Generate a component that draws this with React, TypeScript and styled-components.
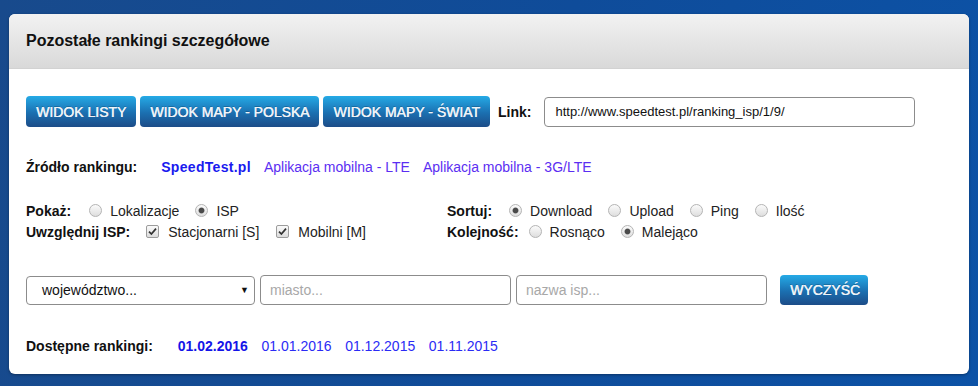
import React from 'react';
import styled, { createGlobalStyle } from 'styled-components';

const GlobalStyle = createGlobalStyle`
  html, body {
    margin: 0;
    padding: 0;
  }
  body {
    width: 978px;
    height: 386px;
    overflow: hidden;
    background: linear-gradient(100deg, #184a8c 0%, #0f4c9a 55%, #0c52a6 100%);
    font-family: 'Liberation Sans', Arial, sans-serif;
    font-size: 14px;
    color: #111;
  }
`;

const dates = ['01.02.2016', '01.01.2016', '01.12.2015', '01.11.2015'];

const App = () => {
  return (
    <>
      <GlobalStyle />
      <Card>
        <Header>
          <Title>Pozostałe rankingi szczegółowe</Title>
        </Header>
        <Body>
          <ButtonRow>
            <BlueButton>WIDOK LISTY</BlueButton>
            <BlueButton>WIDOK MAPY - POLSKA</BlueButton>
            <BlueButton>WIDOK MAPY - ŚWIAT</BlueButton>
            <LinkLabel>Link:</LinkLabel>
            <LinkInput readOnly value='http://www.speedtest.pl/ranking_isp/1/9/' />
          </ButtonRow>

          <SourceRow>
            <Label $space={24}>Źródło rankingu:</Label>
            <SourceLink $active>SpeedTest.pl</SourceLink>
            <SourceLink>Aplikacja mobilna - LTE</SourceLink>
            <SourceLink>Aplikacja mobilna - 3G/LTE</SourceLink>
          </SourceRow>

          <Options>
            <OptionRow>
              <Label $space={18}>Pokaż:</Label>
              <Option $first>
                <Radio />
                Lokalizacje
              </Option>
              <Option>
                <Radio $checked />
                ISP
              </Option>
            </OptionRow>
            <OptionRow>
              <Label $space={17}>Sortuj:</Label>
              <Option $first>
                <Radio $checked />
                Download
              </Option>
              <Option>
                <Radio />
                Upload
              </Option>
              <Option>
                <Radio />
                Ping
              </Option>
              <Option>
                <Radio />
                Ilość
              </Option>
            </OptionRow>
            <OptionRow>
              <Label $space={16}>Uwzględnij ISP:</Label>
              <Option $first $wide>
                <Check />
                Stacjonarni [S]
              </Option>
              <Option $wide>
                <Check />
                Mobilni [M]
              </Option>
            </OptionRow>
            <OptionRow>
              <Label $space={10}>Kolejność:</Label>
              <Option $first>
                <Radio />
                Rosnąco
              </Option>
              <Option>
                <Radio $checked />
                Malejąco
              </Option>
            </OptionRow>
          </Options>

          <FilterRow>
            <SelectBox>
              <span>województwo...</span>
              <Arrow>▼</Arrow>
            </SelectBox>
            <TextInput placeholder='miasto...' />
            <TextInput placeholder='nazwa isp...' />
            <ClearButton>WYCZYŚĆ</ClearButton>
          </FilterRow>

          <DatesRow>
            <Label $space={25}>Dostępne rankingi:</Label>
            {dates.map((d, i) => (
              <DateLink key={d} $active={i === 0}>
                {d}
              </DateLink>
            ))}
          </DatesRow>
        </Body>
      </Card>
    </>
  );
};

const Radio = ({ $checked }: { $checked?: boolean }) => (
  <RadioDot $checked={$checked} />
);

const Check = () => (
  <CheckBox>
    <svg width='9' height='9' viewBox='0 0 9 9'>
      <path d='M1 4.6 L3.4 7 L8 1.6' fill='none' stroke='#333' strokeWidth='1.7' />
    </svg>
  </CheckBox>
);

export default App;

// styled
const Card = styled.div`
  margin: 14px 0 0 9px;
  width: 960px;
  height: 360px;
  background: #fff;
  border-radius: 6px;
  overflow: hidden;
  box-shadow: 0 1px 3px rgba(0, 0, 0, 0.35);
`;

const Header = styled.div`
  height: 55px;
  display: flex;
  align-items: center;
  padding-left: 17px;
  background: linear-gradient(#f2f2f2, #d9d9d9);
  border-bottom: 1px solid #d2d2d2;
  box-sizing: border-box;
`;

const Title = styled.h1`
  margin: 0;
  font-size: 16px;
  font-weight: bold;
  color: #111;
`;

const Body = styled.div`
  padding: 27px 17px 0;
`;

const ButtonRow = styled.div`
  display: flex;
  align-items: center;
  gap: 4px;
  height: 31px;
`;

const BlueButton = styled.button`
  height: 31px;
  padding: 0 10px;
  border: none;
  border-radius: 4px;
  background: linear-gradient(#25aae6, #1b6fb0 55%, #1c4c88);
  color: #eef3f8;
  font-family: 'Liberation Sans', Arial, sans-serif;
  font-size: 14px;
  text-shadow: 0.4px 0 0 #eef3f8, 0 -1px 0 rgba(0, 0, 0, 0.2);
  cursor: pointer;
`;

const LinkLabel = styled.span`
  font-weight: bold;
  margin: 0 9px 0 4px;
`;

const LinkInput = styled.input`
  width: 371px;
  height: 30px;
  box-sizing: border-box;
  border: 1px solid #8c8c8c;
  border-radius: 4px;
  padding: 0 10px;
  font-family: 'Liberation Sans', Arial, sans-serif;
  font-size: 13px;
  color: #111;
  outline: none;
`;

const SourceRow = styled.div`
  display: flex;
  align-items: center;
  height: 20px;
  margin-top: 30px;
`;

const Label = styled.span<{ $space: number }>`
  font-weight: bold;
  margin-right: ${(p) => p.$space}px;
  white-space: nowrap;
`;

const SourceLink = styled.a<{ $active?: boolean }>`
  margin-right: 13px;
  color: ${(p) => (p.$active ? '#1a1aef' : '#5b2ef2')};
  font-weight: ${(p) => (p.$active ? 'bold' : 'normal')};
  letter-spacing: ${(p) => (p.$active ? '0.3px' : '0')};
  cursor: pointer;
`;

const Options = styled.div`
  display: grid;
  grid-template-columns: 421px auto;
  grid-auto-rows: 21px;
  margin-top: 23px;
`;

const OptionRow = styled.div`
  display: flex;
  align-items: center;
  white-space: nowrap;
`;

const Option = styled.label<{ $first?: boolean; $wide?: boolean }>`
  display: inline-flex;
  align-items: center;
  gap: ${(p) => (p.$wide ? 9 : 8)}px;
  margin-left: ${(p) => (p.$first ? 0 : p.$wide ? 17 : 16)}px;
  color: #222;
`;

const RadioDot = styled.span<{ $checked?: boolean }>`
  display: inline-block;
  width: 13px;
  height: 13px;
  box-sizing: border-box;
  border-radius: 50%;
  border: 1px solid #b4b4b4;
  background: ${(p) =>
    p.$checked
      ? 'radial-gradient(circle, #4a4a4a 0 2.4px, #8a8a8a 2.8px, transparent 3.4px), linear-gradient(#fbfbfb, #dedede)'
      : 'linear-gradient(#fbfbfb, #dedede)'};
`;

const CheckBox = styled.span`
  display: inline-flex;
  align-items: center;
  justify-content: center;
  width: 13px;
  height: 13px;
  box-sizing: border-box;
  border: 1px solid #9c9c9c;
  border-radius: 2px;
  background: linear-gradient(#fbfbfb, #dcdcdc);
`;

const FilterRow = styled.div`
  display: flex;
  align-items: center;
  height: 30px;
  margin-top: 33px;
`;

const SelectBox = styled.div`
  width: 229px;
  height: 29px;
  box-sizing: border-box;
  border: 1px solid #8c8c8c;
  border-radius: 4px;
  display: flex;
  align-items: center;
  justify-content: space-between;
  padding: 0 5px 0 15px;
  font-size: 14px;
  color: #111;
`;

const Arrow = styled.span`
  font-size: 9px;
  color: #111;
`;

const TextInput = styled.input`
  width: 251px;
  height: 30px;
  box-sizing: border-box;
  margin-left: 5px;
  border: 1px solid #8c8c8c;
  border-radius: 4px;
  padding: 0 9px;
  font-family: 'Liberation Sans', Arial, sans-serif;
  font-size: 14px;
  outline: none;
  &::placeholder {
    color: #a8a8a8;
  }
`;

const ClearButton = styled(BlueButton)`
  margin-left: 13px;
  height: 30px;
  padding: 0 10px;
  width: 88px;
`;

const DatesRow = styled.div`
  display: flex;
  align-items: center;
  height: 20px;
  margin-top: 31px;
`;

const DateLink = styled.a<{ $active?: boolean }>`
  margin-right: 13.6px;
  color: ${(p) => (p.$active ? '#1414e8' : '#2b2bf5')};
  font-weight: ${(p) => (p.$active ? 'bold' : 'normal')};
  cursor: pointer;
`;
